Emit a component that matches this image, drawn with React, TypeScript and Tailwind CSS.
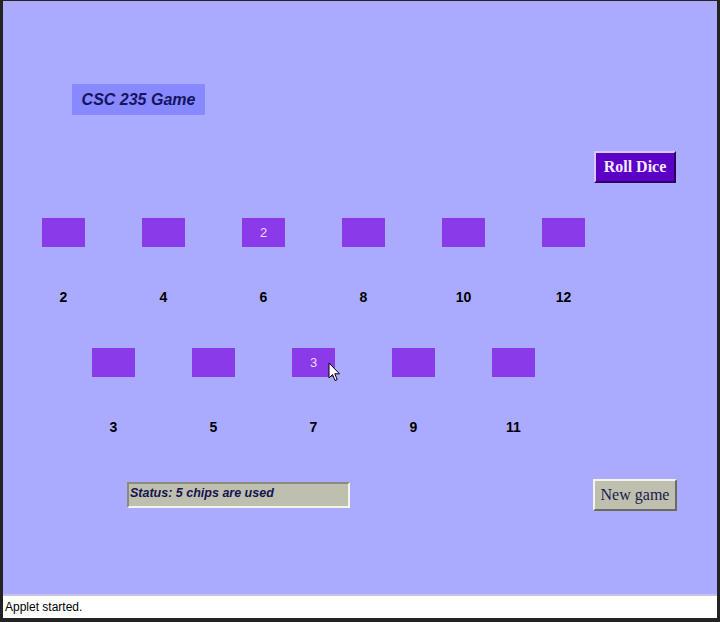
import React from 'react'

const topChips: { label: number; value?: number }[] = [
  { label: 2 },
  { label: 4 },
  { label: 6, value: 2 },
  { label: 8 },
  { label: 10 },
  { label: 12 },
]

const bottomChips: { label: number; value?: number }[] = [
  { label: 3 },
  { label: 5 },
  { label: 7, value: 3 },
  { label: 9 },
  { label: 11 },
]

function ChipRow({ chips, offset }: { chips: { label: number; value?: number }[]; offset: string }) {
  return (
    <div className={`flex gap-[57px] ${offset}`}>
      {chips.map((c) => (
        <div key={c.label} className="flex w-[43px] flex-col items-center">
          <div className="flex h-[29px] w-[43px] items-center justify-center bg-[#8a3ae8] text-[13px] text-[#ecdcff]">
            {c.value ?? ''}
          </div>
          <div className="mt-[42px] h-[16px] text-[14px] font-bold leading-[16px] text-black">{c.label}</div>
        </div>
      ))}
    </div>
  )
}

export default function App() {
  return (
    <div
      className="flex h-[622px] w-[720px] flex-col bg-[#232323] pb-[4px] pl-[3px] pr-[3px] pt-[1px]"
      style={{ fontFamily: '"Liberation Sans", Arial, sans-serif' }}
    >
      <div className="relative flex flex-1 flex-col bg-[#aaaaff]">
        <div className="ml-[69px] mt-[83px] flex h-[31px] w-[133px] items-center justify-center bg-[#8888ff] text-[16px] font-bold italic text-[#141460]">
          CSC 235 Game
        </div>

        <div className="mt-[36px] flex justify-end pr-[41px]">
          <button className="h-[32px] w-[82px] border-2 border-b-[#2a0060] border-l-[#d8c8ff] border-r-[#2a0060] border-t-[#d8c8ff] bg-[#5c00c8] text-[16px] font-bold text-[#f4eaff] [font-family:'Liberation_Serif',serif]">
            Roll Dice
          </button>
        </div>

        <div className="mt-[35px]">
          <ChipRow chips={topChips} offset="ml-[39px]" />
        </div>

        <div className="mt-[43px]">
          <ChipRow chips={bottomChips} offset="ml-[89px]" />
        </div>

        <div className="mt-[44px] flex items-start">
          <div className="ml-[124px] mt-[3px] flex h-[26px] w-[223px] items-center border-2 border-b-[#f4f4ec] border-l-[#8a8a80] border-r-[#f4f4ec] border-t-[#8a8a80] bg-[#bfbfaf] pb-[3px] pl-[1px] text-[12.5px] font-bold italic text-[#141450]">
            Status: 5 chips are used
          </div>
          <button className="ml-[243px] h-[32px] w-[84px] border-2 border-b-[#6a6a60] border-l-[#f4f4ec] border-r-[#6a6a60] border-t-[#f4f4ec] bg-[#bfbfaf] text-[16px] text-[#1a1a50] [font-family:'Liberation_Serif',serif]">
            New game
          </button>
        </div>

        <svg className="absolute left-[325px] top-[361px]" width="13" height="20" viewBox="0 0 13 20">
          <path d="M1 1 L1 16 L4.5 12.5 L7 18.5 L9.2 17.6 L6.8 11.8 L11.5 11.8 Z" fill="#ffffff" stroke="#000000" strokeWidth="1" strokeLinejoin="miter" />
        </svg>
      </div>
      <div className="h-[2px] bg-[#c4c4e8]" />
      <div className="flex h-[22px] items-center bg-white pl-[2px] text-[12px] text-black">Applet started.</div>
    </div>
  )
}
